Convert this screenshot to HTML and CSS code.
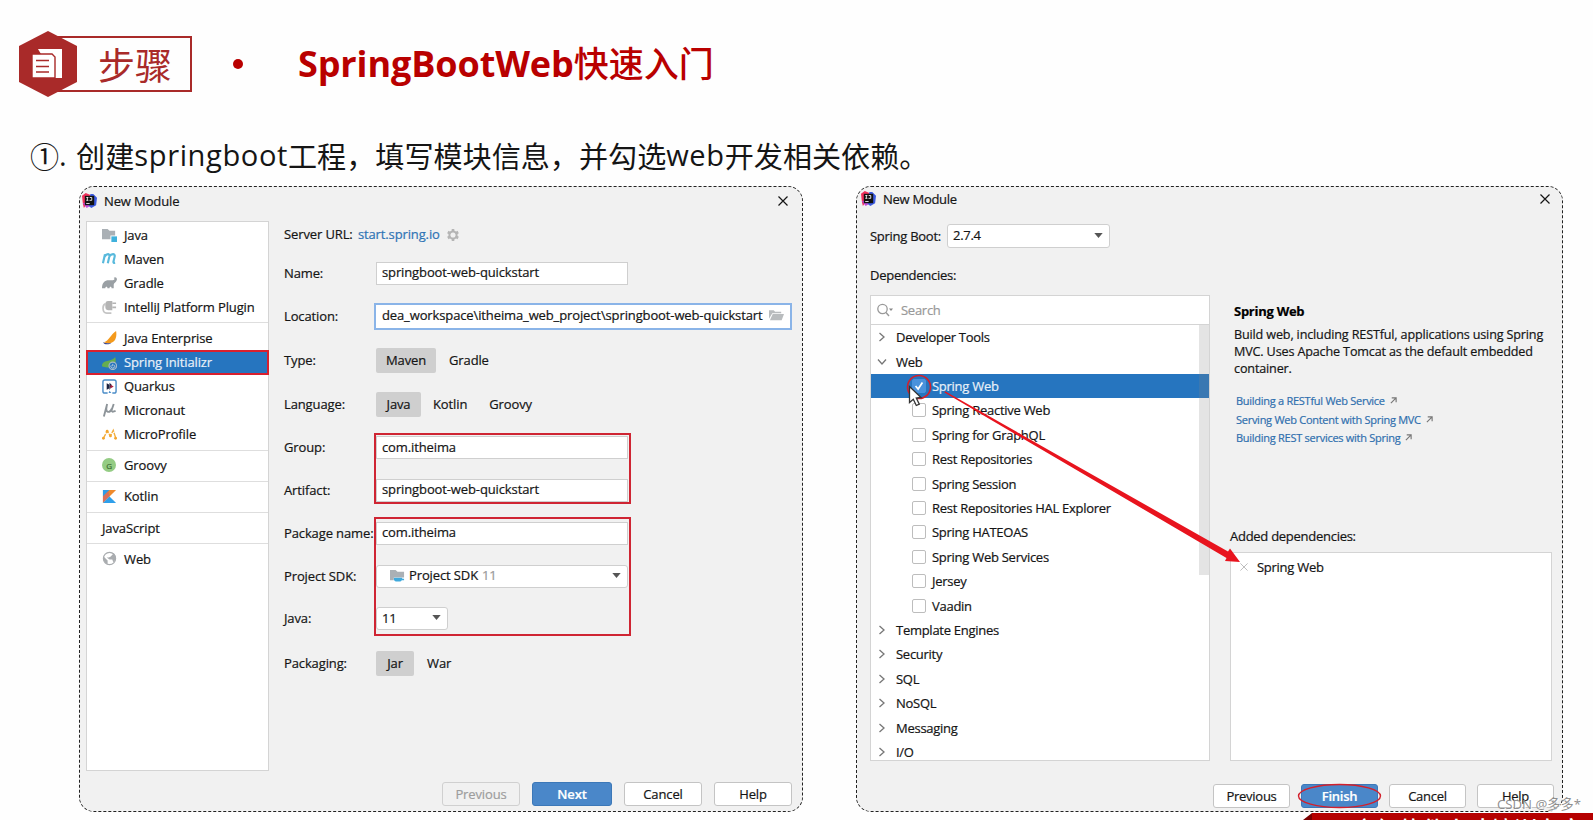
FILE: index.html
```html
<!DOCTYPE html>
<html lang="zh-CN">
  <head>
    <meta charset="UTF-8" />
    <meta name="viewport" content="width=device-width, initial-scale=1.0" />
    <title>SpringBootWeb快速入门</title>
    <link rel="stylesheet" href="styles.css">
  </head>
  <body>
    <!-- shared icons -->
    <svg class="defs" width="0" height="0">
      <symbol id="logo" viewBox="0 0 16 16">
        <path d="M0 3 4 0l5 2-2 7-5 7-1-4z" fill="#f0305a" />
        <path d="M9 1l3 0 4 4-1 8-5 3-4-3z" fill="#3d5be0" />
        <path d="M1 11l4 5 3-2-4-4z" fill="#c04bd8" />
        <path d="M3 3h10v10H3z" fill="#111" />
        <path d="M4.6 4.8h2.2M5.7 4.8v3M4.6 7.8h2.2M8.2 4.8h2.2v3H8M4.5 11.2h3.6" stroke="#fff" stroke-width=".9" fill="none" />
      </symbol>
      <symbol id="close" viewBox="0 0 10 10">
        <path d="M.5.5l9 9M9.5.5l-9 9" stroke="currentColor" stroke-width="1.2" fill="none" />
      </symbol>
      <symbol id="chevron" viewBox="0 0 8 10">
        <path d="M1.5 1l4.5 4-4.5 4" stroke="#777" stroke-width="1.3" fill="none" />
      </symbol>
      <symbol id="caret" viewBox="0 0 10 6">
        <path d="M0 0h10L5 6z" fill="#555" />
      </symbol>
      <symbol id="out" viewBox="0 0 8 8">
        <path d="M2 1h5v5M7 1L1 7" stroke="#777" stroke-width="1.3" fill="none" />
      </symbol>
    </svg>

    <header class="header">
      <div class="badge">
        <svg class="hexagon" viewBox="0 0 58 66">
          <path d="M29 0l29 15v36L29 66 0 51V15z" fill="#a92a29" />
          <path d="M19 18h24v29h-7" fill="#fff" />
          <path d="M13 23h20l3 3v21H13z" fill="#fff" stroke="#a92a29" stroke-width="1.400" />
          <path d="M17 29.500h13M17 35.500h13M17 41h13" stroke="#a92a29" stroke-width="1.600" />
        </svg>
        <span class="badge-text">步骤</span>
      </div>
      <span class="dot"></span>
      <h1 class="title"><span class="title-en">SpringBootWeb</span>快速入门</h1>
    </header>

    <p class="step"><span class="num">①</span><span class="point">.</span>创建<span class="en">springboot</span>工程，填写模块信息，并勾选<span class="en">web</span>开发相关依赖。</p>

    <main class="dialogs">
      <section class="dialog dialog-left">
        <div class="titlebar">
          <svg class="logo"><use href="#logo" /></svg>
          <span>New Module</span>
          <svg class="close"><use href="#close" /></svg>
        </div>

        <div class="module-body">
          <nav class="sidebar">
            <ul class="group">
              <li class="item">
                <svg class="icon" viewBox="0 0 16 16"><path d="M0 2h6l2 2h6v5H9v4H0z" fill="#aab0b5" /><path d="M10 10h6v6h-6z" fill="#3fb1dc" /></svg>Java
              </li>
              <li class="item">
                <svg class="icon" viewBox="0 0 16 16"><path d="M1 13L3.2 3.5M2.8 6C5 2.5 8.500 2.500 7.800 6L6.200 13M7.600 6C10 2.500 14.300 2.500 13.500 6l-1.300 5.500q-.2 1.500 1.800 1" stroke="#58b9dc" stroke-width="2.300" fill="none" /></svg>Maven
              </li>
              <li class="item">
                <svg class="icon" viewBox="0 0 16 16"><path d="M0 14C0 8 3 5.500 7 5.500c2 0 3 .5 4.500 0C13.500 5 14 4 12.500 3.200 14 1.500 16.500 3 15.800 5.300 15 8 13 8 12.500 10v4h-2.300c0-2-2-2-2.200 0H5.800c0-2-2-2-2.300 0z" fill="#9aa0a4" /></svg>Gradle
              </li>
              <li class="item">
                <svg class="icon" viewBox="0 0 16 16"><path d="M6.500 2H11v10H6.500C4 12 3.500 10 3.500 7s.5-5 3-5z" fill="#b4b4b4" /><path d="M11 4.500h4M11 9h4" stroke="#b4b4b4" stroke-width="1.800" /><path d="M4 5C0 6 0 15 5 15h5" stroke="#c4c4c4" stroke-width="1.800" fill="none" /></svg>IntelliJ Platform Plugin
              </li>
            </ul>
            <ul class="group">
              <li class="item">
                <svg class="icon" viewBox="0 0 16 16"><path d="M15 1c1 5 0 11-5 12.500C7 14.500 4 14 2 13 8 11 9 5 15 1z" fill="#f49a1c" /><path d="M1 13c3 1.500 6 1.500 9 .5-2 2-7 3-9-.5z" fill="#33408c" /></svg>Java Enterprise
              </li>
              <li class="item selected">
                <svg class="icon" viewBox="0 0 16 16"><path d="M14 2c2 6-1 10-6 11-3 .6-6 0-8-1 0-8 10-4 14-10z" fill="#66ad4f" /><circle cx="11.500" cy="11.500" r="4" fill="#2675bf" stroke="#a5b8c8" stroke-width="1.300" /><path d="M11.500 9.500v2.500M9.800 11a2 2 0 1 0 3.400 0" stroke="#c8d4dd" fill="none" /></svg>Spring Initializr
              </li>
              <li class="item">
                <svg class="icon" viewBox="0 0 16 16"><path d="M6 15H3q-2 0-2-2V3q0-2 2-2h10q2 0 2 2v10q0 2-2 2h-2" fill="#fff" stroke="#4a8cc8" stroke-width="1.500" /><path d="M5 4.500l3 1.700v3.600l-3 1.700z" fill="#1c2340" /><path d="M8 4l2.500 2.500L8 12z" fill="#1c2340" /><path d="M9 6l3.500 2L9 10z" fill="#b02040" /><path d="M8 12.500l2 2.500H7z" fill="#4a8cc8" /></svg>Quarkus
              </li>
              <li class="item">
                <svg class="icon" viewBox="0 0 16 16"><path d="M5.500 1L2 14.500M5 3.500C3 11 8.500 11 10.500 6M12.500 1L10.300 7.500Q9.600 10.500 14.500 8.500" stroke="#8d9499" stroke-width="2" fill="none" /></svg>Micronaut
              </li>
              <li class="item">
                <svg class="icon" viewBox="0 0 16 16"><path d="M1.500 12L5.500 4.500 9 9.500l3-6L14.700 12" stroke="#f3ae3d" stroke-width="1.500" fill="none" stroke-dasharray="5 1" /><g fill="#f3a52d"><circle cx="1.500" cy="12" r="1.500" /><circle cx="5.500" cy="4.500" r="1.500" /><circle cx="9" cy="9.500" r="1.500" /><circle cx="14.500" cy="12" r="1.500" /></g></svg>MicroProfile
              </li>
            </ul>
            <ul class="group">
              <li class="item"><span class="icon groovy">G</span>Groovy</li>
            </ul>
            <ul class="group">
              <li class="item">
                <svg class="icon" viewBox="0 0 16 16"><path d="M1 1h14L1 15z" fill="#ef8a2c" /><path d="M1 1h7L1 8z" fill="#2f9be8" /><path d="M1 8l6-6 1 6-7 7z" fill="#d8705c" /><path d="M1 15l7-7 7 7z" fill="#2f9fea" /></svg>Kotlin
              </li>
            </ul>
            <ul class="group">
              <li class="item">JavaScript</li>
            </ul>
            <ul class="group">
              <li class="item">
                <svg class="icon" viewBox="0 0 16 16"><circle cx="8" cy="8" r="6.500" fill="#fff" stroke="#a9acaf" stroke-width="1.300" /><path d="M2 6l4 4v4C3 13 1 10 2 6zM5 2.500C8 1 11 1 12 3L9 6 7 7H5l3 2h3l1 3c4-3 3-8 0-10-3-1.500-5-1-7 .5z" fill="#a9acaf" /></svg>Web
              </li>
            </ul>
          </nav>

          <div class="form">
            <span class="label">Server URL: <a class="link">start.spring.io</a>
              <svg class="gear" viewBox="0 0 14 14"><path d="M7 1v3M7 10v3M1.800 4l2.600 1.500M9.600 8.500l2.600 1.500M1.800 10l2.600-1.500M9.600 5.500L12.200 4" stroke="#b5b5b5" stroke-width="2.600" /><circle cx="7" cy="7" r="3.600" fill="none" stroke="#b5b5b5" stroke-width="2" /></svg>
            </span>
            <span></span>

            <span class="label">Name:</span>
            <div class="input">springboot-web-quickstart</div>

            <span class="label">Location:</span>
            <div class="input location"><span class="path">dea_workspace\itheima_web_project\springboot-web-quickstart</span>
              <svg class="folder" viewBox="0 0 16 12"><path d="M0 10V1h5l1.500 1.500H13V4H3.500z" fill="#b9bcbe" /><path d="M4 5h12l-2.500 6.500H1z" fill="#b9bcbe" /></svg>
            </div>

            <span class="label">Type:</span>
            <div class="tabs"><span class="tab active tab-maven">Maven</span><span class="tab">Gradle</span></div>

            <span class="label">Language:</span>
            <div class="tabs tabs-lang"><span class="tab active tab-java">Java</span><span class="tab">Kotlin</span><span class="tab">Groovy</span></div>

            <span class="label">Group:</span>
            <div class="input">com.itheima</div>

            <span class="label">Artifact:</span>
            <div class="input">springboot-web-quickstart</div>

            <span class="label">Package name:</span>
            <div class="input">com.itheima</div>

            <span class="label">Project SDK:</span>
            <div class="input select sdk">
              <svg class="icon" viewBox="0 0 16 16"><path d="M0 2h6l2 2h7v6H4v3H0z" fill="#aab0b5" /><path d="M4 10.500h9v1h2v1.500h-2.500q-.5 1.500-2 1.500H6.500Q4 14.500 4 10.500z" fill="#3fa9dc" /></svg>
              <span>Project SDK</span><span class="version">11</span>
              <svg class="caret"><use href="#caret" /></svg>
            </div>

            <span class="label">Java:</span>
            <div class="input select java-version">11<svg class="caret"><use href="#caret" /></svg></div>

            <span class="label">Packaging:</span>
            <div class="tabs"><span class="tab active tab-jar">Jar</span><span class="tab">War</span></div>

            <div class="mark mark-group"></div>
            <div class="mark mark-package"></div>
          </div>
        </div>

        <footer class="buttons">
          <span class="btn disabled">Previous</span>
          <span class="btn primary">Next</span>
          <span class="btn">Cancel</span>
          <span class="btn">Help</span>
        </footer>
      </section>

      <section class="dialog dialog-right">
        <div class="titlebar">
          <svg class="logo"><use href="#logo" /></svg>
          <span>New Module</span>
          <svg class="close"><use href="#close" /></svg>
        </div>

        <div class="boot">
          <span>Spring Boot:</span>
          <div class="input select boot-version">2.7.4<svg class="caret"><use href="#caret" /></svg></div>
        </div>
        <div class="caption">Dependencies:</div>

        <div class="deps">
          <div class="tree">
            <div class="search">
              <svg class="search-icon" viewBox="0 0 17 14"><circle cx="5.500" cy="6" r="4.700" stroke="#999" stroke-width="1.300" fill="none" /><path d="M9 9.500l3 3.500" stroke="#999" stroke-width="1.400" /><path d="M12 5.500h4L14 8z" fill="#888" /></svg>
              Search
            </div>
            <div class="rows">
              <div class="row"><svg class="chevron"><use href="#chevron" /></svg>Developer Tools</div>
              <div class="row"><svg class="chevron open"><use href="#chevron" /></svg>Web</div>
              <div class="row child current"><span class="check checked"><svg viewBox="0 0 14 14"><path d="M3 7l3 3.500L11 3" stroke="#fff" stroke-width="2" fill="none" /></svg></span>Spring Web</div>
              <div class="row child"><span class="check"></span>Spring Reactive Web</div>
              <div class="row child"><span class="check"></span>Spring for GraphQL</div>
              <div class="row child"><span class="check"></span>Rest Repositories</div>
              <div class="row child"><span class="check"></span>Spring Session</div>
              <div class="row child"><span class="check"></span>Rest Repositories HAL Explorer</div>
              <div class="row child"><span class="check"></span>Spring HATEOAS</div>
              <div class="row child"><span class="check"></span>Spring Web Services</div>
              <div class="row child"><span class="check"></span>Jersey</div>
              <div class="row child"><span class="check"></span>Vaadin</div>
              <div class="row"><svg class="chevron"><use href="#chevron" /></svg>Template Engines</div>
              <div class="row"><svg class="chevron"><use href="#chevron" /></svg>Security</div>
              <div class="row"><svg class="chevron"><use href="#chevron" /></svg>SQL</div>
              <div class="row"><svg class="chevron"><use href="#chevron" /></svg>NoSQL</div>
              <div class="row"><svg class="chevron"><use href="#chevron" /></svg>Messaging</div>
              <div class="row"><svg class="chevron"><use href="#chevron" /></svg>I/O</div>
              <div class="scrollbar"></div>
            </div>
          </div>

          <div class="details">
            <div class="about">
              <h2 class="about-title">Spring Web</h2>
              <p class="about-text">Build web, including RESTful, applications using Spring<br>MVC. Uses Apache Tomcat as the default embedded<br>container.</p>
              <a class="guide">Building a RESTful Web Service <svg class="out"><use href="#out" /></svg></a>
              <a class="guide">Serving Web Content with Spring MVC <svg class="out"><use href="#out" /></svg></a>
              <a class="guide">Building REST services with Spring <svg class="out"><use href="#out" /></svg></a>
            </div>
            <div class="added-title">Added dependencies:</div>
            <div class="added">
              <svg class="remove"><use href="#close" /></svg>Spring Web
            </div>
          </div>
        </div>

        <footer class="buttons">
          <span class="btn">Previous</span>
          <span class="btn primary">Finish</span>
          <span class="btn">Cancel</span>
          <span class="btn">Help</span>
        </footer>

        <!-- red marks and mouse pointer over the dialog -->
        <svg class="overlay" viewBox="856 186 707 626">
          <circle cx="919" cy="387" r="11.500" fill="none" stroke="#d3202c" stroke-width="1.600" />
          <path d="M944.500 392.500l.5-1.200L1228 551.500l2-3 10 13.500-15-1 1.500-3z" fill="#e8141e" />
          <path d="M909.500 386.500v16l3.800-3.200 3 6.200 3-1.400-3-6 4.700-.6z" fill="#fff" stroke="#333" stroke-width="1.300" />
          <ellipse cx="1339.500" cy="796" rx="41" ry="11.500" fill="none" stroke="#d3202c" stroke-width="1.400" />
        </svg>
      </section>
    </main>

    <div class="banner"><span class="banner-text">高级软件人才培训专家</span></div>
    <div class="watermark">CSDN @多多*</div>
  </body>
</html>
```
FILE: styles.css
```css
* {
  box-sizing: border-box;
}

body {
  margin: 0;
  width: 1593px;
  height: 820px;
  overflow: hidden;
  position: relative;
  background-color: #fefefe;
  color: #151515;
  font-family: "Open Sans", "Noto Sans CJK SC", sans-serif;
  font-size: 13px;
  font-weight: 500;
}

ul,
p,
h1,
h2 {
  margin: 0;
  padding: 0;
  list-style: none;
}

svg {
  flex: none;
}

.defs {
  position: absolute;
}

/* heading */

.header {
  display: flex;
  align-items: center;
  height: 128px;
  padding-left: 19px;
}

.badge {
  display: flex;
  align-items: center;
  width: 173px;
  height: 66px;
}

.hexagon {
  width: 58px;
  height: 66px;
  position: relative;
  z-index: 1;
}

.badge-text {
  display: flex;
  align-items: center;
  width: 143px;
  height: 56px;
  margin-left: -28px;
  padding-left: 47px;
  border: 2px solid #a92a29;
  color: #a92a29;
  font-size: 37px;
  font-weight: 400;
}

.dot {
  width: 10px;
  height: 10px;
  margin-left: 41px;
  border-radius: 50%;
  background-color: #b90000;
}

.title {
  margin-left: 55px;
  color: #b90000;
  font-size: 35px;
  font-weight: 500;
  line-height: 50px;
  white-space: nowrap;
}

.title-en {
  font-size: 36px;
  font-weight: 700;
  letter-spacing: -0.12px;
}

.step {
  display: flex;
  align-items: center;
  height: 58px;
  padding: 0 0 4px 30px;
  font-size: 29.1px;
  font-weight: 400;
  white-space: nowrap;
}

.en {
  letter-spacing: 0.6px;
}

.point {
  width: 17px;
}

/* dialogs */

.dialogs {
  display: flex;
  gap: 53px;
  padding-left: 79px;
}

.dialog {
  display: flex;
  flex-direction: column;
  position: relative;
  height: 626px;
  border: 1px dashed #222;
  border-radius: 15px;
  background-color: #f1f1f1;
  -webkit-text-stroke: 0.2px;
}

.dialog-left {
  width: 724px;
  letter-spacing: -0.12px;
}

.dialog-right {
  width: 707px;
  letter-spacing: -0.27px;
}

.titlebar {
  display: flex;
  align-items: center;
  height: 27px;
  padding: 0 14px 0 2px;
}

.logo {
  width: 15px;
  height: 15px;
  margin-right: 7px;
}

.close {
  width: 10px;
  height: 10px;
  margin-left: auto;
}

.dialog-right .titlebar {
  height: 23px;
  padding: 0 12px 0 4px;
}

.module-body {
  display: flex;
  height: 550px;
  margin: 7px 0 0 6px;
}

.sidebar {
  width: 183px;
  border: 1px solid #d4d4d4;
  background-color: #fff;
}

.group {
  padding: 3px 0;
  border-bottom: 1px solid #dedede;
}

.group:first-child {
  padding-top: 1px;
}

.group:last-child {
  border-bottom: 0;
}

.item {
  display: flex;
  align-items: center;
  height: 24.1px;
  padding: 0 0 1px 15px;
}

.icon {
  width: 15px;
  height: 15px;
  margin-right: 7px;
}

.selected {
  margin: 0 -1px;
  padding-left: 14px;
  border: 2px solid #d9202e;
  background-color: #2675bf;
  color: #e8f0f8;
}

.groovy {
  display: flex;
  align-items: center;
  justify-content: center;
  width: 14px;
  height: 14px;
  margin-right: 8px;
  border-radius: 50%;
  background-color: #94cc84;
  color: #3c6b30;
  font-size: 8px;
}

.form {
  display: grid;
  grid-template-columns: 92px 420px;
  grid-template-rows: 40px 38px 48px 40px 48px 39px 46px 40px 46px 39px 50px;
  align-items: center;
  position: relative;
  height: 474px;
  margin: -7px 0 0 15px;
}

.label {
  padding-bottom: 1px;
  white-space: nowrap;
}

.link {
  margin-left: 2px;
  color: #2f74b5;
}

.gear {
  width: 14px;
  height: 14px;
  margin-left: 3px;
  vertical-align: -3px;
}

.input {
  display: flex;
  align-items: center;
  width: 252px;
  height: 23px;
  padding: 0 6px 2px 5px;
  border: 1px solid #cfcfcf;
  background-color: #fff;
  white-space: nowrap;
}

.location {
  width: 418px;
  height: 27px;
  margin-left: -2px;
  padding-left: 6px;
  border: 2px solid #8ab4e8;
}

.folder {
  width: 15px;
  height: 12px;
  margin-left: auto;
}

.tabs {
  display: flex;
  align-items: center;
  gap: 13px;
}

.tabs-lang {
  gap: 12px;
}

.tabs-lang .tab + .tab + .tab {
  margin-left: 10px;
}

.tab {
  display: flex;
  align-items: center;
  justify-content: center;
  height: 25px;
  padding-bottom: 1px;
}

.active {
  border-radius: 2px;
  background-color: #cfcfcf;
}

.tab-maven {
  width: 60px;
}

.tab-java {
  width: 45px;
}

.tab-jar {
  width: 38px;
}

.select {
  border-radius: 3px;
}

.caret {
  width: 9px;
  height: 5px;
  margin-left: auto;
}

.sdk {
  padding-left: 13px;
}

.sdk .icon {
  margin-right: 4px;
}

.version {
  margin-left: 4px;
  color: #9a9a9a;
}

.java-version {
  width: 72px;
}

.mark {
  position: absolute;
  left: 90px;
  width: 257px;
  border: 2px solid #cf2533;
}

.mark-group {
  top: 219px;
  height: 71px;
}

.mark-package {
  top: 303px;
  height: 119px;
}

.buttons {
  display: flex;
  gap: 12px;
  margin: auto 10px 5px auto;
}

.btn {
  display: flex;
  align-items: center;
  justify-content: center;
  width: 78px;
  height: 24px;
  border: 1px solid #c4c4c4;
  border-radius: 3px;
  background-color: #fff;
}

.disabled {
  background-color: #f1f1f1;
  border-color: #d0d0d0;
  color: #9d9d9d;
}

.primary {
  width: 80px;
  border-color: #3c78b8;
  background-color: #4a87c9;
  color: #fff;
  font-weight: 600;
}

/* dependencies */

.boot {
  display: flex;
  align-items: center;
  height: 24px;
  margin: 14px 0 0 13px;
}

.boot-version {
  width: 163px;
  height: 24px;
  margin-left: auto;
  margin-right: 452px;
}

.caption {
  height: 47px;
  padding-left: 13px;
  line-height: 54px;
}

.deps {
  display: flex;
  gap: 20px;
  height: 466px;
  padding-left: 13px;
}

.tree {
  width: 340px;
  border: 1px solid #d4d4d4;
  background-color: #fff;
  overflow: hidden;
}

.search {
  display: flex;
  align-items: center;
  height: 29px;
  padding-left: 6px;
  border-bottom: 1px solid #d4d4d4;
  color: #999;
}

.search-icon {
  width: 17px;
  height: 14px;
  margin-right: 7px;
}

.rows {
  position: relative;
}

.row {
  display: flex;
  align-items: center;
  height: 24.41px;
  padding-left: 7px;
  white-space: nowrap;
}

.chevron {
  width: 8px;
  height: 10px;
  margin-right: 10px;
}

.open {
  transform: rotate(90deg);
}

.child {
  padding-left: 41px;
}

.current {
  background-color: #2675bf;
  color: #e8f0f8;
}

.check {
  width: 14px;
  height: 14px;
  margin-right: 6px;
  border: 1px solid #bdbdbd;
  border-radius: 2px;
  background-color: #fff;
}

.checked {
  border-color: #4a92dc;
  background-color: #4a92dc;
}

.checked svg {
  display: block;
  width: 12px;
  height: 12px;
}

.scrollbar {
  position: absolute;
  top: 0;
  right: 0;
  width: 10px;
  height: 250px;
  background-color: rgba(130, 130, 130, 0.22);
}

.details {
  width: 322px;
}

.about {
  height: 230px;
  padding: 7px 0 0 4px;
}

.about-title {
  margin-bottom: 6px;
  color: #000;
  font-size: 13px;
  line-height: 19px;
}

.about-text {
  margin-bottom: 14px;
  font-size: 12.6px;
  letter-spacing: -0.15px;
  line-height: 16.8px;
  white-space: nowrap;
}

.guide {
  display: flex;
  align-items: center;
  height: 18.5px;
  padding-left: 2px;
  color: #2f6fae;
  font-size: 11px;
}

.out {
  width: 7px;
  height: 7px;
  margin-left: 5px;
}

.added-title {
  height: 27px;
  line-height: 23px;
}

.added {
  display: flex;
  align-items: flex-start;
  height: 209px;
  padding: 5px 0 0 9px;
  border: 1px solid #d4d4d4;
  background-color: #fff;
}

.remove {
  width: 8px;
  height: 8px;
  margin: 5px 9px 0 0;
  color: #bbb;
}

.dialog-right .buttons {
  gap: 11px;
  margin: auto 8px 3px auto;
}

.dialog-right .btn {
  width: 77px;
}

.overlay {
  position: absolute;
  left: -1px;
  top: -1px;
  width: 707px;
  height: 626px;
}

/* page corner */

.banner {
  position: absolute;
  left: 1303px;
  top: 813px;
  width: 290px;
  height: 7px;
  padding-left: 50px;
  overflow: hidden;
  background: linear-gradient(90deg, #7c0000 9px, #b50000 9px);
  clip-path: polygon(9px 0, 100% 0, 100% 100%, 0 100%);
}

.banner-text {
  display: block;
  margin-top: 3px;
  color: #fff;
  font-size: 23px;
  line-height: 26px;
  white-space: nowrap;
}

.watermark {
  position: absolute;
  left: 1497px;
  top: 793px;
  color: #8f8f8f;
  font-size: 13.2px;
  font-weight: 400;
  line-height: 22px;
  text-shadow: 1px 1px 0 #fff;
  white-space: nowrap;
}
```
